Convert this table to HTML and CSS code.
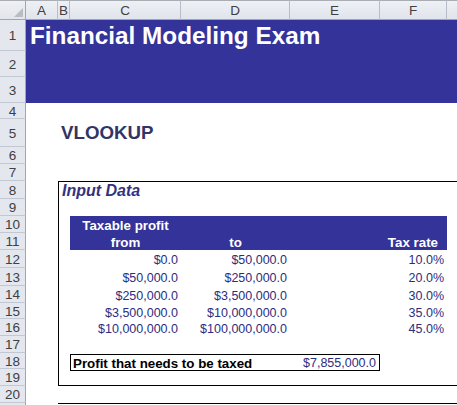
FILE: index.html
```html
<!DOCTYPE html>
<html>
<head>
<meta charset="utf-8">
<link rel="stylesheet" href="styles.css">
</head>
<body>
<div class="sheet">
  <div class="colbar">
    <div class="corner"><svg width="10" height="10" viewBox="0 0 10 10"><polygon points="10,1 10,10 1,10" fill="#b9bcc2"/></svg></div>
    <div class="ch wA">A</div>
    <div class="ch wB">B</div>
    <div class="ch wC">C</div>
    <div class="ch wD">D</div>
    <div class="ch wE">E</div>
    <div class="ch wF">F</div>
    <div class="ch wG"></div>
  </div>
  <div class="body">
    <div class="rowbar">
      <div class="rh h31">1</div>
      <div class="rh h26">2</div>
      <div class="rh h26">3</div>
      <div class="rh h16">4</div>
      <div class="rh h28">5</div>
      <div class="rh h17">6</div>
      <div class="rh h17">7</div>
      <div class="rh h18">8</div>
      <div class="rh h17">9</div>
      <div class="rh h17">10</div>
      <div class="rh h17">11</div>
      <div class="rh h18">12</div>
      <div class="rh h18">13</div>
      <div class="rh h17">14</div>
      <div class="rh h16">15</div>
      <div class="rh h17">16</div>
      <div class="rh h17">17</div>
      <div class="rh h16">18</div>
      <div class="rh h17">19</div>
      <div class="rh h17">20</div>
      <div class="rh h17"></div>
    </div>
    <div class="cells">
      <div class="band"><span class="title">Financial Modeling Exam</span></div>
      <div class="subtitle">VLOOKUP</div>
      <div class="frame"></div>
      <div class="frame2"></div>
      <div class="section">Input Data</div>
      <div class="thband"></div>
      <div class="th r10 cC center">Taxable profit</div>
      <div class="th r11 cC center">from</div>
      <div class="th r11 cD center">to</div>
      <div class="th r11 cF right pr">Tax rate</div>

      <div class="num r12 cC">$0.0</div>
      <div class="num r12 cD">$50,000.0</div>
      <div class="num r12 cF">10.0%</div>
      <div class="num r13 cC">$50,000.0</div>
      <div class="num r13 cD">$250,000.0</div>
      <div class="num r13 cF">20.0%</div>
      <div class="num r14 cC">$250,000.0</div>
      <div class="num r14 cD">$3,500,000.0</div>
      <div class="num r14 cF">30.0%</div>
      <div class="num r15 cC">$3,500,000.0</div>
      <div class="num r15 cD">$10,000,000.0</div>
      <div class="num r15 cF">35.0%</div>
      <div class="num r16 cC">$10,000,000.0</div>
      <div class="num r16 cD">$100,000,000.0</div>
      <div class="num r16 cF">45.0%</div>

      <div class="result">
        <span class="rlabel">Profit that needs to be taxed</span>
        <span class="rvalue">$7,855,000.0</span>
      </div>
    </div>
  </div>
</div>
</body>
</html>
```
FILE: styles.css
```css
html, body {
  margin: 0;
  padding: 0;
  background: #ffffff;
}
body {
  font-family: "Liberation Sans", Arial, sans-serif;
  width: 457px;
  height: 405px;
  overflow: hidden;
}
.sheet {
  width: 457px;
  height: 405px;
  overflow: hidden;
  display: flex;
  flex-direction: column;
}
.colbar {
  display: flex;
  height: 20px;
  flex: none;
}
.corner {
  width: 26px;
  flex: none;
  box-sizing: border-box;
  background: linear-gradient(#eef0f4, #e2e5eb);
  border-right: 1px solid #9ea6b3;
  border-bottom: 1px solid #9ea6b3;
  border-top: 1px solid #a9adb4;
  display: flex;
  align-items: flex-end;
  justify-content: flex-end;
  padding: 0 2px 2px 0;
}
.ch {
  flex: none;
  box-sizing: border-box;
  background: linear-gradient(#eef0f4, #e0e4eb);
  border-right: 1px solid #b7bec9;
  border-bottom: 1px solid #9ea6b3;
  border-top: 1px solid #a9adb4;
  display: flex;
  align-items: center;
  justify-content: center;
  font-size: 13.5px;
  color: #404040;
  padding-top: 1px;
}
.wA { width: 32px; }
.wB { width: 12px; }
.wC { width: 111px; }
.wD { width: 109px; }
.wE { width: 90px; }
.wF { width: 67px; }
.wG { width: 20px; }

.body {
  display: flex;
  flex: none;
}
.rowbar {
  width: 26px;
  flex: none;
  display: flex;
  flex-direction: column;
}
.rh {
  box-sizing: border-box;
  background: #e4e7ee;
  border-right: 1px solid #9ea6b3;
  border-bottom: 1px solid #c2c8d3;
  display: flex;
  align-items: center;
  justify-content: center;
  font-size: 13.5px;
  color: #404040;
  padding-top: 1px;
}
.h31 { height: 31px; }
.h26 { height: 26px; }
.h16 { height: 16px; }
.h28 { height: 28px; }
.h17 { height: 17px; }
.h18 { height: 18px; }

.cells {
  flex: none;
  width: 431px;
  display: grid;
  grid-template-columns: 32px 12px 111px 109px 90px 67px 40px;
  grid-template-rows: 31px 26px 26px 16px 28px 17px 17px 18px 17px 17px 17px 18px 18px 17px 16px 17px 17px 16px 17px 17px 17px;
}

.band {
  grid-row: 1 / 4;
  grid-column: 1 / -1;
  background: #333399;
  padding: 4px 0 0 4px;
}
.title {
  display: block;
  color: #ffffff;
  font-weight: bold;
  font-size: 24.3px;
  line-height: 24px;
  white-space: nowrap;
}
.subtitle {
  grid-row: 5;
  grid-column: 2 / 6;
  color: #333366;
  font-weight: bold;
  font-size: 18.7px;
  line-height: 28px;
  padding-left: 3px;
  white-space: nowrap;
}
.frame {
  grid-row: 8 / 20;
  grid-column: 2 / -1;
  border: 1px solid #000000;
  border-right: none;
}
.frame2 {
  grid-row: 21;
  grid-column: 2 / -1;
  border-top: 1px solid #000000;
}
.section {
  grid-row: 8;
  grid-column: 2 / 6;
  color: #333380;
  font-weight: bold;
  font-style: italic;
  font-size: 16px;
  line-height: 18px;
  padding: 1px 0 0 4px;
  white-space: nowrap;
}
.thband {
  grid-row: 10 / 12;
  grid-column: 3 / 7;
  background: #333399;
}
.th {
  color: #ffffff;
  font-weight: bold;
  font-size: 13.33px;
  line-height: 17px;
  padding-top: 1px;
  white-space: nowrap;
}
.center { text-align: center; }
.right { text-align: right; }
.pr { padding-right: 9px; }
.r10 { grid-row: 10; }
.r11 { grid-row: 11; }
.r12 { grid-row: 12; }
.r13 { grid-row: 13; }
.r14 { grid-row: 14; }
.r15 { grid-row: 15; }
.r16 { grid-row: 16; }
.cC { grid-column: 3; }
.cD { grid-column: 4; }
.cF { grid-column: 6; }

.num {
  color: #2d2d80;
  font-size: 12.5px;
  line-height: 17px;
  padding: 2px 3px 0 0;
  text-align: right;
  white-space: nowrap;
}
.result {
  grid-row: 18;
  grid-column: 3 / 6;
  border: 1px solid #000000;
  display: flex;
  justify-content: space-between;
  align-items: center;
  padding: 1px 3px 0 2px;
  margin-top: 1px;
  margin-bottom: -2px;
}
.rlabel {
  font-weight: bold;
  font-size: 13.33px;
  color: #000000;
  white-space: nowrap;
}
.rvalue {
  font-size: 12.5px;
  color: #2d2d80;
  white-space: nowrap;
}
```
